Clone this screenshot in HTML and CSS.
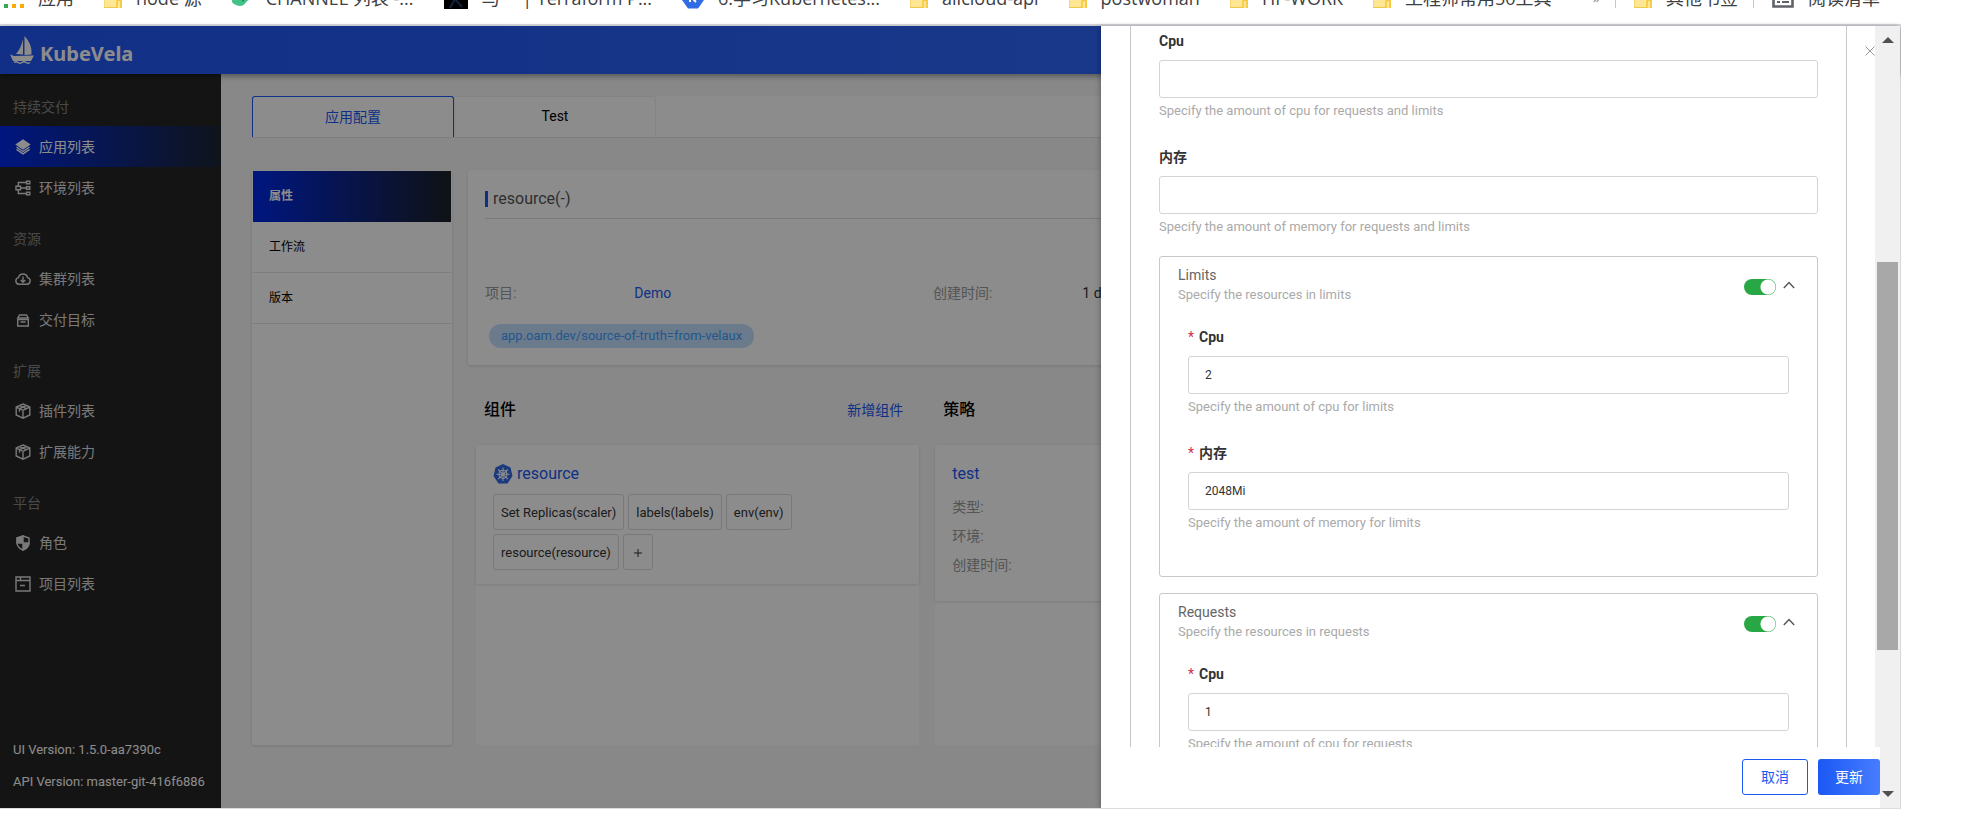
FILE: index.html
```html
<!DOCTYPE html>
<html lang="zh-CN">

<head>
    <meta charset="UTF-8">
    <meta name="viewport" content="width=device-width, initial-scale=1.0">
    <title>KubeVela</title>
    <link rel="stylesheet" href="styles.css">
</head>

<body>

    <!-- Shared icons -->
    <svg class="sprite" aria-hidden="true">
        <symbol id="folder" viewBox="0 0 18 16">
            <path d="M0 2a2 2 0 0 1 2-2h5l2 2h7a2 2 0 0 1 2 2v12H0z" fill="#f8d775" />
            <path d="M1 5h16v10H1z" fill="#ffe694" />
            <path d="M0 15h18v1H0z" fill="#efc94c" />
            <path d="M13 16V10q0-2 2-2t2 2v6" fill="#ffe694" stroke="#f3c62f" stroke-width="1.4" />
        </symbol>
        <symbol id="cube" viewBox="0 0 16 16">
            <path d="M8 1l6.8 3v8L8 15.200 1.200 12V4zM1.200 4L8 7.300 14.800 4M8 7.300v8M4.500 2.500l6.800 3.200M11.300 2.500L4.500 5.700v3" />
        </symbol>
        <symbol id="chevron" viewBox="0 0 12 8">
            <path d="M.8 7L6 1.500 11.200 7" fill="none" stroke="#555" stroke-width="1.400" />
        </symbol>
    </svg>

    <div class="window">
        <nav class="bookmarks">
            <div class="bookmarks-row">
                <a class="bookmark apps" href="#">
                    <svg width="20" height="20" viewBox="0 0 20 20">
                        <path d="M0 14h4v4H0z" fill="#34a853" />
                        <path d="M8 14h4v4H8zM16 14h4v4h-4z" fill="#fbab00" />
                        <path d="M0 0h4v3H0zM8 0h4v3H8zM16 0h4v3h-4zM0 6h4v4H0zM8 6h4v4H8zM16 6h4v4h-4z" fill="#ea4335" />
                    </svg>应用</a>
                <a class="bookmark" href="#"><svg width="18" height="16"><use href="#folder" /></svg>node 源</a>
                <a class="bookmark" href="#">
                    <svg width="20" height="14" viewBox="0 0 20 14">
                        <path d="M0 5L8 0h12q0 6-5 8-3 5-7 5Q2 12 0 9z" fill="#43c486" />
                        <path d="M7 3h8l-4 6z" fill="#148c5c" />
                    </svg>CHANNEL 列表 -...</a>
                <a class="bookmark" href="#">
                    <svg width="24" height="18" viewBox="0 0 24 18">
                        <path d="M0 0h24v18H0z" fill="#000" />
                        <path d="M8 4l3 4-5 9M11 8l7 8" fill="none" stroke="#10233f" stroke-width="2" />
                    </svg>马一 | Terraform P...</a>
                <a class="bookmark" href="#">
                    <svg width="22" height="18" viewBox="0 0 22 18">
                        <path d="M2 0h18l2 9-6 8.500H6L0 9z" fill="#326ce5" />
                        <path d="M8 1v10M14 2l-5 4 5 5" fill="none" stroke="#fff" stroke-width="2" />
                    </svg>6.学习Kubernetes...</a>
                <a class="bookmark" href="#"><svg width="18" height="16"><use href="#folder" /></svg>alicloud-api</a>
                <a class="bookmark" href="#"><svg width="18" height="16"><use href="#folder" /></svg>postwoman</a>
                <a class="bookmark" href="#"><svg width="18" height="16"><use href="#folder" /></svg>HF-WORK</a>
                <a class="bookmark" href="#"><svg width="18" height="16"><use href="#folder" /></svg>工程师常用50工具</a>
                <div class="bookmarks-end">
                    <span class="more">»</span>
                    <a class="bookmark divided" href="#"><svg width="18" height="16"><use href="#folder" /></svg>其他书签</a>
                    <a class="bookmark divided" href="#">
                        <svg width="22" height="16" viewBox="0 0 22 16">
                            <path d="M1.500 0v14.500h19V0" fill="none" stroke="#5f6368" stroke-width="2.600" />
                            <path d="M5 5h3v2H5zM10 5h7v2h-7zM5 9h3v2H5zM10 9h7v2h-7z" fill="#5f6368" />
                        </svg>阅读清单</a>
                </div>
            </div>
        </nav>

        <div class="app">
            <header class="topbar">
                <svg class="boat" width="24" height="28" viewBox="0 0 24 28" fill="#fff">
                    <path d="M14.500 0C20 6 22 12 21.500 18.500l-7 .5zM13 3v15.500L6 18C9.500 14 12 9 13 3z" />
                    <path d="M0 18.500l4 1.500 20-.5-3 5.500H3z" />
                    <path d="M4 26.500q2-1.500 4 0t4 0 4 0 4 0" fill="none" stroke="#fff" stroke-width="1.500" />
                </svg>
                <span class="brand">KubeVela</span>
            </header>

            <div class="layout">
                <aside class="sidebar">
                    <h4>持续交付</h4>
                    <a class="active" href="#">
                        <svg viewBox="0 0 16 16">
                            <path class="solid" d="M8 1l6.500 4.500L8 10 1.500 5.500z" />
                            <path d="M1.500 8L8 12.500 14.500 8M1.500 10.300L8 14.800l6.500-4.500" />
                        </svg>应用列表</a>
                    <a href="#">
                        <svg viewBox="0 0 16 16">
                            <path d="M1 6.200h4.500v3.600H1zM11.500 1.200h3.300v2.600h-3.300zM11.500 6.700h3.300v2.600h-3.300zM11.500 12.200h3.300v2.600h-3.300zM5.500 8h6M11.500 2.500H3.300v3.700M11.500 13.500H3.300V9.800" />
                        </svg>环境列表</a>
                    <h4>资源</h4>
                    <a href="#">
                        <svg viewBox="0 0 16 16">
                            <path d="M4 13.300a3.400 3.400 0 0 1-.5-6.700 4.600 4.600 0 0 1 9 0 3.400 3.400 0 0 1-.5 6.700zM8 5.500v5.500M5.700 9L8 11.300 10.300 9" />
                        </svg>集群列表</a>
                    <a href="#">
                        <svg viewBox="0 0 16 16">
                            <path d="M2.700 7.500h10.600V14H2.700zM5.500 10h5" />
                            <path d="M4.500 3h7l1.800 3H2.700zM2.700 6h10.600" />
                        </svg>交付目标</a>
                    <h4>扩展</h4>
                    <a href="#"><svg><use href="#cube" /></svg>插件列表</a>
                    <a href="#"><svg><use href="#cube" /></svg>扩展能力</a>
                    <h4>平台</h4>
                    <a href="#">
                        <svg viewBox="0 0 16 16">
                            <path d="M8 1l6 2v5q0 4.500-6 7-6-2.500-6-7V3z" />
                            <path class="solid" d="M8 1v7H2V3zM8 8h6q0 4.500-6 7z" />
                        </svg>角色</a>
                    <a href="#">
                        <svg viewBox="0 0 16 16">
                            <path d="M1 1h14v14H1zM1 4.500h14M5.500 1v3.500M5 9.500h5" />
                        </svg>项目列表</a>
                    <div class="versions">
                        <p>UI Version: 1.5.0-aa7390c</p>
                        <p>API Version: master-git-416f6886</p>
                    </div>
                </aside>

                <main class="main">
                    <div class="tabs">
                        <button class="tab active" type="button">应用配置</button>
                        <button class="tab" type="button">Test</button>
                    </div>

                    <div class="detail">
                        <div class="card side-menu">
                            <a class="active" href="#">属性</a>
                            <a href="#">工作流</a>
                            <a href="#">版本</a>
                        </div>

                        <div class="content">
                            <section class="card summary">
                                <h2><span>resource(-)</span></h2>
                                <div class="summary-row">
                                    <span class="key">项目:</span>
                                    <a href="#">Demo</a>
                                    <span class="key">创建时间:</span>
                                    <span>1 day ago</span>
                                </div>
                                <span class="pill">app.oam.dev/source-of-truth=from-velaux</span>
                            </section>

                            <div class="columns">
                                <section class="column">
                                    <div class="column-head">
                                        <h3>组件</h3>
                                        <a href="#">新增组件</a>
                                    </div>
                                    <div class="column-body">
                                        <div class="card item">
                                            <a class="item-title" href="#">
                                                <svg width="20" height="20" viewBox="0 0 20 20">
                                                    <path d="M10 0l7.500 3.500L19.500 12l-5 7.500h-9L.5 12l2-8.500z" fill="#326ce5" />
                                                    <g fill="none" stroke="#fff" stroke-width="1.100">
                                                        <circle cx="10" cy="10.300" r="4" />
                                                        <path d="M10 3.500v13.500M3.500 10.300h13M5.200 5.500l9.600 9.600M14.800 5.500l-9.600 9.600" />
                                                    </g>
                                                </svg>resource</a>
                                            <div class="traits">
                                                <button type="button">Set Replicas(scaler)</button>
                                                <button type="button">labels(labels)</button>
                                                <button type="button">env(env)</button>
                                                <button type="button">resource(resource)</button>
                                                <button class="add" type="button" aria-label="add">
                                                    <svg width="8" height="8" viewBox="0 0 8 8"><path d="M4 0v8M0 4h8" stroke="#333" /></svg>
                                                </button>
                                            </div>
                                        </div>
                                    </div>
                                </section>

                                <section class="column">
                                    <div class="column-head">
                                        <h3>策略</h3>
                                    </div>
                                    <div class="column-body">
                                        <div class="card item policy">
                                            <a class="item-title" href="#">test</a>
                                            <p>类型:</p>
                                            <p>环境:</p>
                                            <p>创建时间:</p>
                                        </div>
                                    </div>
                                </section>
                            </div>
                        </div>
                    </div>
                </main>
            </div>

            <div class="overlay"></div>

            <aside class="drawer">
                <form class="drawer-form">
                    <div class="drawer-body">
                        <button class="close" type="button" aria-label="close">
                            <svg width="10" height="10" viewBox="0 0 10 10"><path d="M.5.5l9 9M9.500.5l-9 9" stroke="#999" /></svg>
                        </button>
                        <div class="group">
                            <div class="fields">
                                <div class="field">
                                    <label for="cpu">Cpu</label>
                                    <input type="text" id="cpu">
                                    <p>Specify the amount of cpu for requests and limits</p>
                                </div>
                                <div class="field">
                                    <label for="memory">内存</label>
                                    <input type="text" id="memory">
                                    <p>Specify the amount of memory for requests and limits</p>
                                </div>
                            </div>

                            <div class="subgroup">
                                <div class="subgroup-head">
                                    <div>
                                        <label for="limits">Limits</label>
                                        <p>Specify the resources in limits</p>
                                    </div>
                                    <input class="switch" type="checkbox" id="limits" checked>
                                    <svg width="12" height="8"><use href="#chevron" /></svg>
                                </div>
                                <div class="fields">
                                    <div class="field required">
                                        <label for="limits-cpu">Cpu</label>
                                        <input type="text" id="limits-cpu" value="2">
                                        <p>Specify the amount of cpu for limits</p>
                                    </div>
                                    <div class="field required">
                                        <label for="limits-memory">内存</label>
                                        <input type="text" id="limits-memory" value="2048Mi">
                                        <p>Specify the amount of memory for limits</p>
                                    </div>
                                </div>
                            </div>

                            <div class="subgroup">
                                <div class="subgroup-head">
                                    <div>
                                        <label for="requests">Requests</label>
                                        <p>Specify the resources in requests</p>
                                    </div>
                                    <input class="switch" type="checkbox" id="requests" checked>
                                    <svg width="12" height="8"><use href="#chevron" /></svg>
                                </div>
                                <div class="fields">
                                    <div class="field required">
                                        <label for="requests-cpu">Cpu</label>
                                        <input type="text" id="requests-cpu" value="1">
                                        <p>Specify the amount of cpu for requests</p>
                                    </div>
                                </div>
                            </div>
                        </div>
                    </div>
                    <div class="drawer-footer">
                        <button class="btn" type="button">取消</button>
                        <button class="btn primary" type="submit">更新</button>
                    </div>
                </form>

                <div class="scrollbar">
                    <svg width="12" height="28" viewBox="0 0 12 28"><path d="M0 17l6-6 6 6z" fill="#505050" /></svg>
                    <div class="thumb"></div>
                    <svg width="12" height="28" viewBox="0 0 12 28"><path d="M0 11l6 6 6-6z" fill="#505050" /></svg>
                </div>
            </aside>
        </div>
    </div>

</body>

</html>
```

FILE: styles.css
```css
* {
    box-sizing: border-box;
}

body {
    margin: 0;
    background-color: #fff;
    color: #333;
    font-family: Roboto, "Noto Sans CJK SC", sans-serif;
    font-size: 14px;
    line-height: 20px;
}

h2,
h3,
h4,
p {
    margin: 0;
}

a {
    color: #1b58f4;
    text-decoration: none;
}

button,
input {
    font-family: inherit;
}

.sprite {
    position: absolute;
    width: 0;
    height: 0;
}

.window {
    display: flex;
    flex-direction: column;
    height: calc(100vh - 8px);
    margin-right: 62px;
    border-bottom: 1px solid #dadce0;
    overflow: hidden;
}

/* Browser bookmarks, scrolled half out of view */
.bookmarks {
    flex: none;
    height: 26px;
    border-bottom: 2px solid #dadce0;
    overflow: hidden;
}

.bookmarks-row {
    display: flex;
    align-items: center;
    gap: 30px;
    height: 40px;
    margin-top: -22px;
    padding: 0 21px 0 4px;
    font-family: "Open Sans", "Noto Sans CJK SC", sans-serif;
    font-size: 18px;
    white-space: nowrap;
}

.bookmark {
    display: flex;
    align-items: center;
    gap: 14px;
    color: #3c4043;
}

.bookmark svg {
    margin-top: 4px;
}

.bookmarks-end {
    display: flex;
    align-items: center;
    gap: 15px;
    margin-left: auto;
    color: #3c4043;
}

.more {
    color: #888;
    font-size: 14px;
}

.divided {
    padding-left: 18px;
    border-left: 1px solid #c4c7cb;
}

.app {
    position: relative;
    display: flex;
    flex-direction: column;
    flex: 1;
    min-height: 0;
    border-right: 1px solid #dadce0;
}

.topbar {
    display: flex;
    align-items: center;
    gap: 6px;
    flex: none;
    height: 48px;
    padding-left: 10px;
    background: linear-gradient(90deg, #1f57f5, #3a72ff);
    box-shadow: 0 2px 6px rgba(0, 0, 0, 0.4);
    z-index: 1;
}

.brand {
    color: #fff;
    font-family: "Noto Sans", sans-serif;
    font-size: 20px;
    font-weight: bold;
    line-height: 28px;
    padding-top: 8px;
}

.layout {
    display: flex;
    flex: 1;
    min-height: 0;
}

.sidebar {
    display: flex;
    flex-direction: column;
    flex: none;
    width: 221px;
    padding-top: 2px;
    background-color: #262626;
}

.sidebar h4 {
    padding: 21px 13px 9px;
    color: #868686;
    font-size: 14px;
    font-weight: normal;
}

.sidebar a {
    display: flex;
    align-items: center;
    gap: 8px;
    height: 41px;
    padding-left: 15px;
    color: #ddd;
}

.sidebar a.active {
    background: linear-gradient(90deg, #0029e8, #1c2632);
    color: #fff;
}

.sidebar svg {
    width: 16px;
    height: 16px;
    fill: none;
    stroke: currentColor;
    stroke-width: 1.4;
}

.sidebar .solid {
    fill: currentColor;
}

.versions {
    display: grid;
    gap: 12px;
    margin-top: auto;
    padding: 0 13px 16px;
    color: #fff;
    font-size: 13px;
}

.main {
    flex: 1;
    min-width: 0;
    padding: 22px 54px 63px 31px;
    background-color: #f7f7f7;
    display: flex;
    flex-direction: column;
    gap: 32px;
}

.tabs {
    display: flex;
    flex: none;
    height: 42px;
    background-color: #fff;
    border-bottom: 1px solid #e3e3e3;
}

.tab {
    width: 202px;
    padding-bottom: 3px;
    background: none;
    border: 1px solid #f0f0f0;
    border-bottom: 0;
    border-radius: 3px 3px 0 0;
    color: #000;
    font-size: 14px;
}

.tab.active {
    border-color: #1b58f4;
    color: #1b58f4;
}

.detail {
    display: flex;
    gap: 16px;
    flex: 1;
}

.card {
    background-color: #fff;
    border-radius: 3px;
    box-shadow: 0 1px 3px rgba(0, 0, 0, 0.12);
}

.side-menu {
    flex: none;
    width: 200px;
    padding: 1px;
    color: #000;
    font-size: 12px;
}

.side-menu a {
    display: block;
    height: 51px;
    padding: 15px 16px;
    border-bottom: 1px solid #e3e3e3;
    color: #000;
}

.side-menu a.active {
    background: linear-gradient(90deg, #0029e8, #1c2126);
    border-bottom: 0;
    color: #fff;
    font-weight: bold;
}

.content {
    display: flex;
    flex-direction: column;
    flex: 1;
    min-width: 0;
}

.summary {
    height: 195px;
    padding: 16px 17px;
}

.summary h2 {
    height: 33px;
    padding-top: 5px;
    border-bottom: 1px solid #dcdcdc;
    color: #555;
    font-size: 16px;
    font-weight: normal;
    line-height: 16px;
}

.summary h2 span {
    display: inline-block;
    padding-left: 5px;
    border-left: 3px solid #1b58f4;
}

.summary-row {
    display: grid;
    grid-template-columns: 1fr 2fr 1fr 5fr;
    margin-top: 64px;
}

.key {
    color: #999;
}

.pill {
    display: inline-block;
    height: 24px;
    margin: 21px 4px 0;
    padding: 0 12px;
    background-color: #c3e0ff;
    border-radius: 12px;
    color: #409eff;
    font-size: 13px;
    line-height: 24px;
}

.columns {
    display: grid;
    grid-template-columns: repeat(3, 1fr);
    gap: 16px;
    flex: 1;
    padding: 0 8px;
}

.column {
    display: flex;
    flex-direction: column;
}

.column-head {
    display: flex;
    justify-content: space-between;
    align-items: center;
    height: 80px;
    padding: 10px 16px 0 8px;
}

.column-head h3 {
    color: #000;
    font-size: 16px;
    font-weight: 500;
}

.column-body {
    flex: 1;
    background-color: #fff;
}

.item {
    padding: 16px 17px 14px;
}

.item-title {
    display: flex;
    align-items: center;
    gap: 4px;
    height: 26px;
    margin-bottom: 7px;
    font-size: 16px;
}

.traits {
    display: flex;
    flex-wrap: wrap;
    gap: 4px;
    max-width: 320px;
}

.traits button {
    height: 36px;
    padding: 0 7px;
    background: none;
    border: 1px solid #dcdcdc;
    border-radius: 3px;
    color: #333;
    font-size: 13px;
}

.traits .add {
    width: 30px;
}

.policy {
    height: 156px;
    color: #999;
}

.policy .item-title {
    margin-bottom: 10px;
}

.policy p {
    margin-bottom: 9px;
}

.overlay {
    position: absolute;
    inset: 0;
    background-color: rgba(0, 0, 0, 0.45);
    z-index: 2;
}

.drawer {
    position: absolute;
    top: 0;
    right: 0;
    bottom: 0;
    display: flex;
    width: 799px;
    background-color: #fff;
    box-shadow: -2px 0 4px rgba(0, 0, 0, 0.2);
    z-index: 3;
}

.drawer-form {
    display: flex;
    flex-direction: column;
    flex: 1;
}

.drawer-body {
    position: relative;
    flex: 1;
    min-height: 0;
    padding: 0 28px 0 29px;
    overflow: hidden;
}

.close {
    position: absolute;
    top: 20px;
    right: 0;
    padding: 0;
    background: none;
    border: 0;
    line-height: 10px;
}

.group {
    padding: 0 28px 28px;
    border: 1px solid #c8c8c8;
    border-top: 0;
}

.fields {
    display: grid;
    gap: 22px;
}

.field label {
    display: block;
    margin-bottom: 4px;
    font-size: 14px;
    font-weight: bold;
    line-height: 30px;
}

.required label::before {
    content: "*";
    margin-right: 5px;
    color: #d03050;
    font-weight: normal;
}

.field input {
    display: block;
    width: 100%;
    height: 38px;
    padding: 0 16px;
    border: 1px solid #d4d4d4;
    border-radius: 3px;
    color: #333;
    font-size: 12px;
}

.field p,
.subgroup p {
    color: #aaa;
    font-size: 13px;
}

.field p {
    margin-top: 4px;
    line-height: 18px;
}

.subgroup {
    margin-top: 16px;
    border: 1px solid #c8c8c8;
    border-radius: 3px;
}

.fields + .subgroup {
    margin-top: 20px;
}

.subgroup .fields {
    padding: 17px 28px 44px;
}

.subgroup-head {
    display: flex;
    align-items: center;
    gap: 7px;
    padding: 8px 22px 0 18px;
    color: #666;
}

.subgroup-head div {
    flex: 1;
}

.switch {
    appearance: none;
    width: 32px;
    height: 16px;
    margin: 4px 0 0;
    background: radial-gradient(circle at 24px 8px, #fff 7px, #28a745 8px);
    border-radius: 8px;
}

.drawer-footer {
    position: relative;
    display: flex;
    justify-content: flex-end;
    gap: 10px;
    flex: none;
    height: 61px;
    margin-right: -5px;
    padding: 12px 0;
    background-color: #fff;
    z-index: 1;
}

.btn {
    height: 36px;
    padding: 0 18px 3px;
    background-color: #fff;
    border: 1px solid #1b58f4;
    border-radius: 3px;
    color: #1b58f4;
    font-size: 14px;
}

.primary {
    padding: 0 17px 3px;
    background: linear-gradient(90deg, #1b58f4, #477dff);
    border: 0;
    color: #fff;
}

.scrollbar {
    display: flex;
    flex-direction: column;
    align-items: center;
    width: 25px;
    background-color: #f0f0f0;
}

.thumb {
    flex: 1;
    width: 21px;
    margin-top: 208px;
    margin-bottom: 130px;
    background-color: #a8a8a8;
}
```
